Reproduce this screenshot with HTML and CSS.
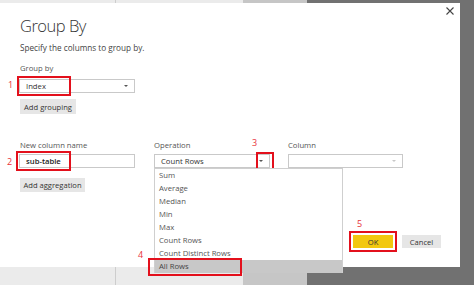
FILE: index.html
```html
<!DOCTYPE html>
<html lang="en">
<head>
<meta charset="utf-8">
<title>Group By</title>
<link rel="stylesheet" href="styles.css">
</head>
<body>
<div class="desktop">
  <div class="pane pane-a"></div>
  <div class="pane pane-b"></div>
  <div class="pane pane-c"></div>
  <div class="pane pane-d"></div>
</div>

<div class="dialog">
  <button class="close" aria-label="Close">
    <svg width="8" height="8" viewBox="0 0 8 8"><path d="M0.5 0.5 L7.5 7.5 M7.5 0.5 L0.5 7.5" stroke="#444" stroke-width="1.1" fill="none"/></svg>
  </button>
  <h1 class="title">Group By</h1>
  <p class="subtitle">Specify the columns to group by.</p>

  <div class="label">Group by</div>
  <div class="select select-group">
    <span class="value">Index</span>
    <span class="caret"></span>
    <span class="mark mark-1"></span>
    <span class="num num-1">1</span>
  </div>
  <button class="btn btn-add-group">Add grouping</button>

  <div class="agg-row">
    <div class="col">
      <div class="label">New column name</div>
      <div class="input">
        <span class="value strong">sub-table</span>
        <span class="mark mark-2"></span>
        <span class="num num-2">2</span>
      </div>
      <button class="btn btn-add-agg">Add aggregation</button>
    </div>
    <div class="col">
      <div class="label">Operation</div>
      <div class="select select-op">
        <span class="value">Count Rows</span>
        <span class="caret"></span>
        <span class="mark mark-3"></span>
        <span class="num num-3">3</span>
        <ul class="list">
          <li>Sum</li>
          <li>Average</li>
          <li>Median</li>
          <li>Min</li>
          <li>Max</li>
          <li>Count Rows</li>
          <li>Count Distinct Rows</li>
          <li class="selected">All Rows</li>
          <li class="mark mark-4"></li>
          <li class="num num-4">4</li>
        </ul>
      </div>
    </div>
    <div class="col">
      <div class="label">Column</div>
      <div class="select select-col">
        <span class="value"></span>
        <span class="caret caret-light"></span>
      </div>
    </div>
  </div>

  <div class="footer">
    <button class="btn btn-ok">OK<span class="mark mark-5"></span><span class="num num-5">5</span></button>
    <button class="btn btn-cancel">Cancel</button>
  </div>
</div>
</body>
</html>
```
FILE: styles.css
```css
* { box-sizing: border-box; }

html, body {
  margin: 0;
  padding: 0;
}

body {
  width: 474px;
  height: 285px;
  overflow: hidden;
  position: relative;
  font-family: "Open Sans", "Noto Sans", "Liberation Sans", sans-serif;
  background: #717171;
}

/* background application behind the modal */
.desktop {
  display: flex;
  height: 285px;
}
.pane { height: 100%; }
.pane-a { width: 116px; background: #ebebeb; border-right: 1px solid #cdcdcd; }
.pane-b { width: 127px; background: #ebebeb; }
.pane-c { width: 64px; background: #c6c6c6; }
.pane-d { flex: 1; background: #717171; }

/* modal window */
.dialog {
  position: absolute;
  left: 0;
  top: 3px;
  width: 460px;
  height: 264px;
  background: #fff;
  padding: 13px 0 0 20px;
}

.close {
  position: absolute;
  right: 6px;
  top: 4px;
  width: 8px;
  height: 8px;
  padding: 0;
  border: 0;
  background: transparent;
  display: flex;
}

.title {
  margin: 0;
  font-size: 16.5px;
  line-height: 20px;
  font-weight: 300;
  color: #333;
  letter-spacing: -0.5px;
}

.subtitle {
  margin: 6px 0 0;
  font-size: 8.2px;
  line-height: 12px;
  color: #444;
}

.label {
  font-size: 7.7px;
  line-height: 12px;
  color: #555;
}

.subtitle + .label { margin-top: 8px; }

.select, .input {
  position: relative;
  height: 14px;
  border: 1px solid #c9c9c9;
  background: #fff;
  font-size: 7.7px;
  line-height: 12px;
  color: #333;
  padding-left: 6px;
  margin-top: 5px;
}

.select-group { width: 116px; margin-left: -1px; }

.value { display: block; white-space: nowrap; }
.value.strong { color: #222; font-weight: 600; }

.caret {
  position: absolute;
  right: 6px;
  top: 5px;
  width: 0;
  height: 0;
  border-left: 2px solid transparent;
  border-right: 2px solid transparent;
  border-top: 2px solid #555;
}
.caret-light { border-top-color: #c8c8c8; }

.btn {
  position: relative;
  display: flex;
  align-items: center;
  justify-content: center;
  height: 15px;
  border: 0;
  background: #e6e6e6;
  font-family: inherit;
  font-size: 7.6px;
  color: #333;
  padding: 0;
  white-space: nowrap;
}

.btn-add-group { margin-top: 6px; width: 56px; }
.btn-add-agg { margin-top: 10px; width: 65px; height: 14px; }

.agg-row {
  display: grid;
  grid-template-columns: 115px 115px 114px;
  column-gap: 19px;
  margin-top: 25px;
}

.input { width: 116px; margin-left: -1px; margin-top: 3px; }
.agg-row .select { margin-top: 3px; }
.select-op { width: 116px; }
.select-col { width: 115px; }

/* open dropdown list */
.list {
  position: absolute;
  left: -1px;
  top: 13px;
  width: 189px;
  margin: 0;
  padding: 0;
  list-style: none;
  background: #fff;
  border: 1px solid #cfcfcf;
  border-bottom: 0;
}
.list li {
  height: 13px;
  line-height: 13px;
  padding-left: 4px;
  color: #555;
  font-size: 7.7px;
  white-space: nowrap;
}
.list li.selected { background: #c8c8c8; color: #444; }

/* footer */
.footer {
  display: flex;
  justify-content: flex-end;
  gap: 9px;
  margin-top: 43px;
  padding-right: 19px;
}
.btn-ok { width: 40px; height: 13px; background: #f2c80f; }
.btn-cancel { width: 39px; height: 13px; }

/* red annotations */
.mark {
  position: absolute;
  border: 2px solid #e3101c;
  pointer-events: none;
  padding: 0;
}
.num {
  position: absolute;
  font-size: 9px;
  line-height: 10px;
  color: #e8333a;
  padding: 0;
  height: 10px;
}
.list li.mark, .list li.num { height: auto; line-height: 10px; background: transparent; }
.list li.num { color: #e8333a; font-size: 9px; padding: 0; }

.mark-1 { left: -3px; top: -4px; width: 54px; height: 20px; }
.num-1 { left: -12px; top: 0; }

.mark-2 { left: -4px; top: -4px; width: 55px; height: 20px; }
.num-2 { left: -13px; top: 2px; }

.mark-3 { left: 101px; top: -3px; width: 18px; height: 20px; }
.num-3 { left: 97px; top: -17px; }

.list li.mark-4 { left: -7px; top: 89px; width: 94px; height: 18px; }
.list li.num-4 { left: -17px; top: 81px; }

.mark-5 { left: -4px; top: -4px; width: 48px; height: 21px; }
.num-5 { left: 4px; top: -16px; }
```
